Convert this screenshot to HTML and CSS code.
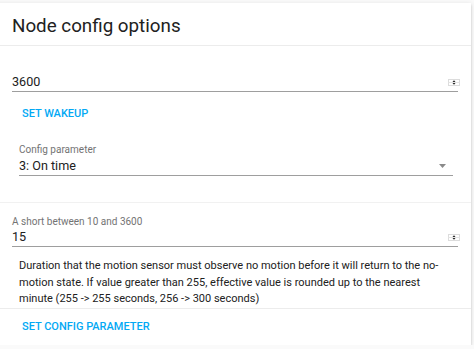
FILE: index.html
```html
<!DOCTYPE html>
<html lang="en">
<head>
<meta charset="utf-8">
<title>Node config options</title>
<link rel="stylesheet" href="styles.css">
</head>
<body>
<div class="card">
  <div class="card-header">Node config options</div>

  <div class="section wakeup">
    <div class="field">
      <span class="value">3600</span>
      <svg class="spinner" width="12" height="7" viewBox="0 0 12 7">
        <rect x="0.5" y="0.5" width="11" height="6" fill="#fff" stroke="#dcdcdc"/>
        <line x1="0.5" y1="3.5" x2="11.5" y2="3.5" stroke="#e4e4e4"/>
        <path d="M4.5 3 L6 1.2 L7.5 3 Z" fill="#222"/>
        <path d="M4.5 4 L6 5.8 L7.5 4 Z" fill="#222"/>
      </svg>
    </div>
    <div class="btn">Set wakeup</div>

    <div class="dropdown">
      <div class="label">Config parameter</div>
      <div class="field">
        <span class="value">3: On time</span>
        <svg class="caret" width="7" height="4" viewBox="0 0 7 4">
          <path d="M0 0 L7 0 L3.5 4 Z" fill="#8a8a8a"/>
        </svg>
      </div>
    </div>
  </div>

  <div class="section config">
    <div class="label">A short between 10 and 3600</div>
    <div class="field">
      <span class="value">15</span>
      <svg class="spinner" width="12" height="7" viewBox="0 0 12 7">
        <rect x="0.5" y="0.5" width="11" height="6" fill="#fff" stroke="#dcdcdc"/>
        <line x1="0.5" y1="3.5" x2="11.5" y2="3.5" stroke="#e4e4e4"/>
        <path d="M4.5 3 L6 1.2 L7.5 3 Z" fill="#222"/>
        <path d="M4.5 4 L6 5.8 L7.5 4 Z" fill="#222"/>
      </svg>
    </div>
    <div class="help">Duration that the motion sensor must observe no motion before it will return to the no-motion state. If value greater than 255, effective value is rounded up to the nearest minute (255 -&gt; 255 seconds, 256 -&gt; 300 seconds)</div>
  </div>

  <div class="actions">
    <div class="btn">Set config parameter</div>
  </div>
</div>
</body>
</html>
```

FILE: styles.css
```css
html, body {
  margin: 0;
  padding: 0;
}
body {
  background: #fafafa;
  font-family: Roboto, "Liberation Sans", sans-serif;
  color: #212121;
  overflow: hidden;
}
.card {
  margin: 3px 3px 0 -4px;
  background: #fff;
  box-shadow: 0 2px 2px rgba(0,0,0,0.14), 0 1px 5px rgba(0,0,0,0.12), 0 3px 1px -2px rgba(0,0,0,0.2);
}
.card-header {
  padding: 7px 16px 3px;
  font-size: 18.8px;
  line-height: 32px;
  color: #212121;
  border-bottom: 1px solid #ececec;
}
.section {
  padding-left: 16px;
  padding-right: 13px;
}
.wakeup {
  padding-top: 27px;
  padding-bottom: 26px;
  border-bottom: 1px solid #f1f1f1;
}
.field {
  display: flex;
  align-items: center;
  border-bottom: 1px solid #9e9e9e;
  font-size: 12.6px;
  line-height: 18px;
  height: 18px;
}
.field .value {
  flex: 1;
}
.spinner {
  margin-right: -2px;
}
.btn {
  display: inline-block;
  padding: 0 10px;
  font-size: 11px;
  font-weight: 500;
  text-transform: uppercase;
  color: #03a9f4;
  line-height: 30px;
  height: 30px;
}
.wakeup .btn {
  margin-top: 7px;
}
.dropdown {
  margin: 14px 5px 0 7px;
}
.dropdown .field {
  height: 19px;
  line-height: 19px;
}
.caret {
  margin-right: 7px;
}
.label {
  font-size: 10px;
  line-height: 13px;
  color: #737373;
}
.config {
  padding-top: 12px;
}
.help {
  margin-top: 11px;
  padding: 0 10px 0 7px;
  font-size: 11px;
  line-height: 16.5px;
  color: #212121;
}
.actions {
  border-top: 1px solid #ececec;
  padding-left: 16px;
  height: 36px;
}
.actions .btn {
  line-height: 36px;
  height: 36px;
}
```
